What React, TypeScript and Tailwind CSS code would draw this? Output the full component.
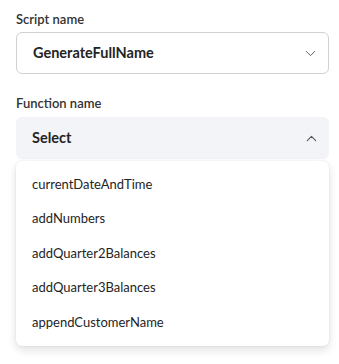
import { ChevronDown, ChevronUp } from "lucide-react";

const functions = [
  "currentDateAndTime",
  "addNumbers",
  "addQuarter2Balances",
  "addQuarter3Balances",
  "appendCustomerName",
];

export default function App() {
  return (
    <div
      className="w-[339px] h-[364px] bg-white pl-4 pr-[10px] pt-[10px] text-[#242424]"
      style={{ fontFamily: 'Lato, "Noto Sans", sans-serif' }}
    >
      <label className="block text-[13px] font-semibold leading-[18px] text-[#333]">
        Script name
      </label>
      <div className="mt-[4px] flex h-[42px] items-center justify-between rounded-md border border-[#d1d1d1] pl-4 pr-[9px]">
        <span className="text-[14.5px] font-bold">GenerateFullName</span>
        <ChevronDown size={17} strokeWidth={1.3} className="text-[#555]" />
      </div>

      <label className="mt-[20px] block text-[13px] font-semibold leading-[18px] text-[#333]">
        Function name
      </label>
      <div className="mt-[5px] flex h-[42px] items-center justify-between rounded-md bg-[#f3f4f8] pl-4 pr-[9px]">
        <span className="text-[14.5px] font-bold">Select</span>
        <ChevronUp size={17} strokeWidth={1.5} className="text-[#555]" />
      </div>

      <div className="mt-[2px] rounded-md bg-white py-[6px] shadow-[0_4px_10px_rgba(0,0,0,0.12),0_0_2px_rgba(0,0,0,0.1)]">
        {functions.map((f) => (
          <div key={f} className="flex h-[34.6px] items-center pl-4 text-[13px]">
            {f}
          </div>
        ))}
      </div>
    </div>
  );
}
